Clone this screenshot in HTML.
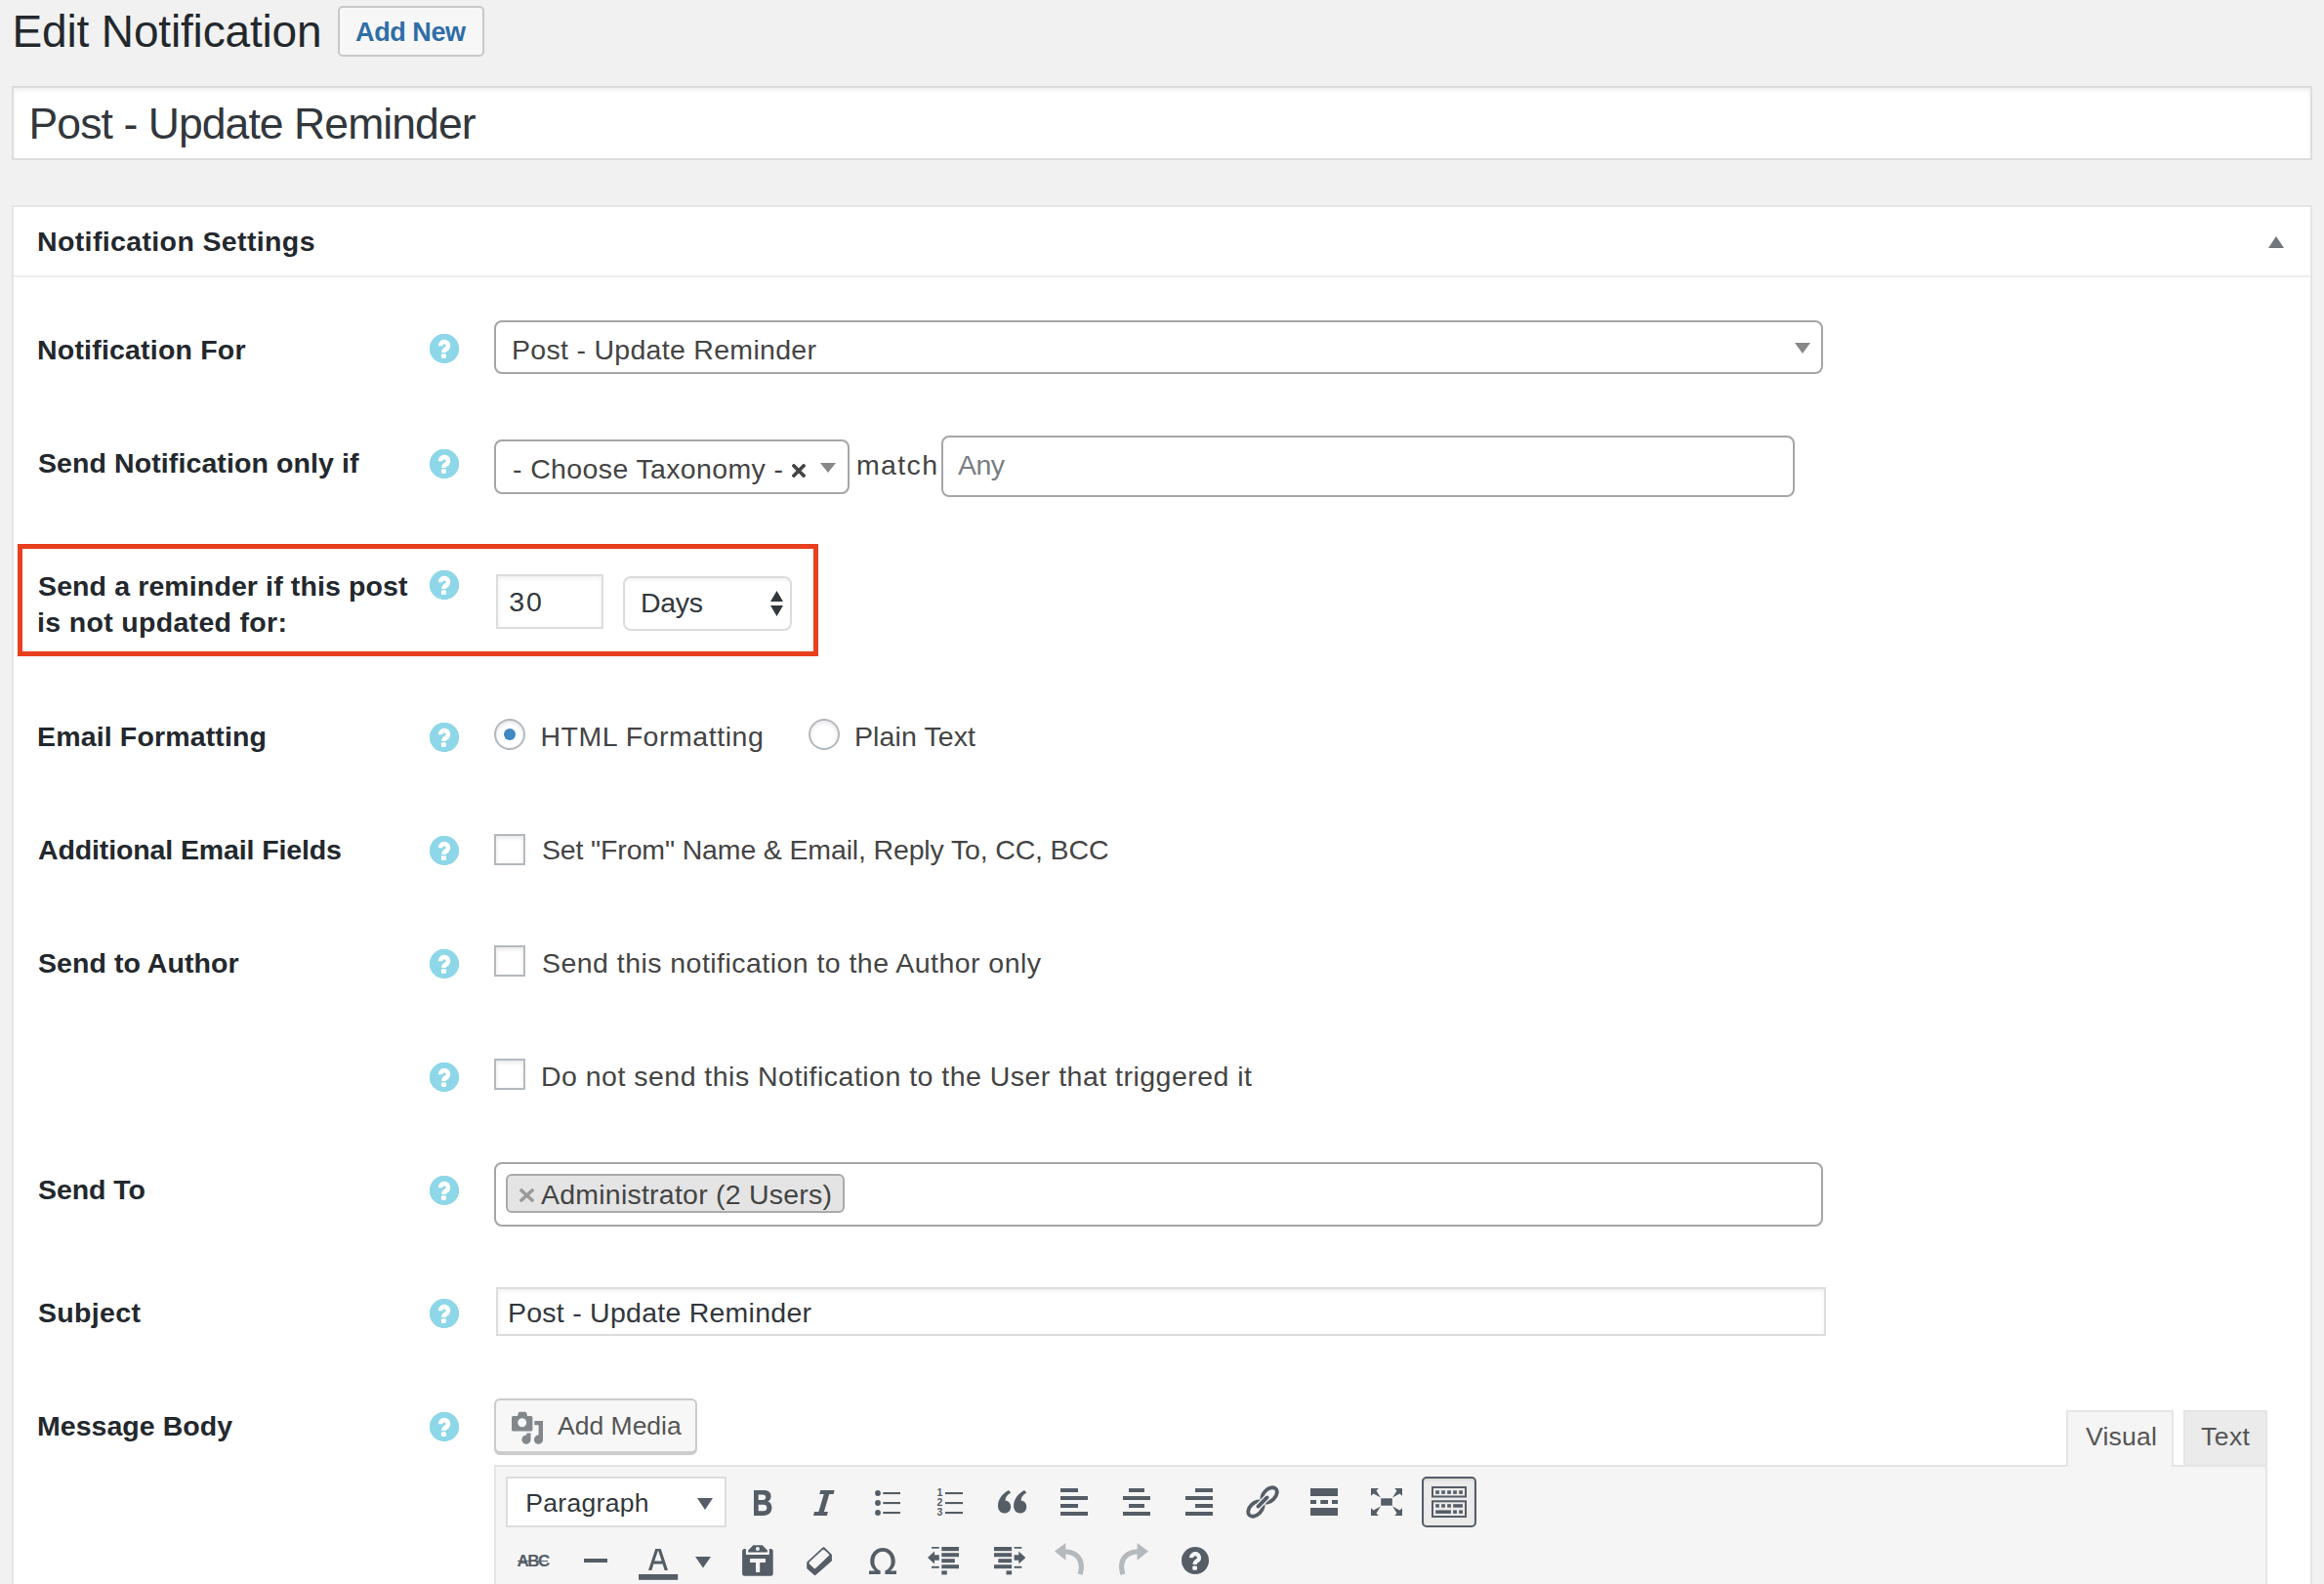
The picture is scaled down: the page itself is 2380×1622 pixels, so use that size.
<!DOCTYPE html>
<html><head><meta charset="utf-8"><title>Edit Notification</title>
<style>
html,body{margin:0;padding:0}
body{width:2380px;height:1622px;overflow:hidden;background:#f1f1f1;position:relative;font-family:"Liberation Sans",sans-serif}
.a{position:absolute;box-sizing:border-box}
.t{position:absolute;white-space:nowrap;font-family:"Liberation Sans",sans-serif}
.help{position:absolute;left:440px;width:30px;height:30px;border-radius:50%;background:#8bd7e8}
.help svg{position:absolute;left:0;top:0}
.cb{position:absolute;left:506px;width:32px;height:32px;box-sizing:border-box;border:2px solid #b4b9be;background:#fff;box-shadow:inset 0 2px 4px rgba(0,0,0,.1)}
.tb{position:absolute;fill:#555d66}

</style></head>
<body>
<!-- Add New button -->
<div class="a" style="left:346px;top:6px;width:150px;height:52px;border:2px solid #c8c8c8;border-radius:5px;background:#f7f7f7"></div>
<!-- title input -->
<div class="a" style="left:12px;top:88px;width:2356px;height:76px;border:2px solid #dddddd;background:#fff;box-shadow:inset 0 2px 4px rgba(0,0,0,.07)"></div>
<!-- postbox -->
<div class="a" style="left:12px;top:210px;width:2356px;height:1412px;border:2px solid #e5e5e5;border-bottom:none;background:#fff"></div>
<div class="a" style="left:14px;top:282px;width:2352px;height:2px;background:#eeeeee"></div>
<svg class="a" style="left:2323px;top:242px" width="16" height="12" viewBox="0 0 16 12"><path d="M8 0L16 12H0Z" fill="#72777c"/></svg>

<!-- help icons -->
<div class="help" style="top:342px"><svg width="30" height="30" viewBox="0 0 30 30"><circle cx="15" cy="15" r="15" fill="#8dd7e8"/><path d="M11 12.2A4 4 0 1 1 18.1 14.6Q14.4 16.4 14.4 19" stroke="#fff" stroke-width="4.6" fill="none"/><rect x="11.9" y="20.2" width="5.1" height="4.7" rx="1.4" fill="#fff"/></svg></div>
<div class="help" style="top:460px"><svg width="30" height="30" viewBox="0 0 30 30"><circle cx="15" cy="15" r="15" fill="#8dd7e8"/><path d="M11 12.2A4 4 0 1 1 18.1 14.6Q14.4 16.4 14.4 19" stroke="#fff" stroke-width="4.6" fill="none"/><rect x="11.9" y="20.2" width="5.1" height="4.7" rx="1.4" fill="#fff"/></svg></div>
<div class="help" style="top:584px"><svg width="30" height="30" viewBox="0 0 30 30"><circle cx="15" cy="15" r="15" fill="#8dd7e8"/><path d="M11 12.2A4 4 0 1 1 18.1 14.6Q14.4 16.4 14.4 19" stroke="#fff" stroke-width="4.6" fill="none"/><rect x="11.9" y="20.2" width="5.1" height="4.7" rx="1.4" fill="#fff"/></svg></div>
<div class="help" style="top:740px"><svg width="30" height="30" viewBox="0 0 30 30"><circle cx="15" cy="15" r="15" fill="#8dd7e8"/><path d="M11 12.2A4 4 0 1 1 18.1 14.6Q14.4 16.4 14.4 19" stroke="#fff" stroke-width="4.6" fill="none"/><rect x="11.9" y="20.2" width="5.1" height="4.7" rx="1.4" fill="#fff"/></svg></div>
<div class="help" style="top:856px"><svg width="30" height="30" viewBox="0 0 30 30"><circle cx="15" cy="15" r="15" fill="#8dd7e8"/><path d="M11 12.2A4 4 0 1 1 18.1 14.6Q14.4 16.4 14.4 19" stroke="#fff" stroke-width="4.6" fill="none"/><rect x="11.9" y="20.2" width="5.1" height="4.7" rx="1.4" fill="#fff"/></svg></div>
<div class="help" style="top:972px"><svg width="30" height="30" viewBox="0 0 30 30"><circle cx="15" cy="15" r="15" fill="#8dd7e8"/><path d="M11 12.2A4 4 0 1 1 18.1 14.6Q14.4 16.4 14.4 19" stroke="#fff" stroke-width="4.6" fill="none"/><rect x="11.9" y="20.2" width="5.1" height="4.7" rx="1.4" fill="#fff"/></svg></div>
<div class="help" style="top:1088px"><svg width="30" height="30" viewBox="0 0 30 30"><circle cx="15" cy="15" r="15" fill="#8dd7e8"/><path d="M11 12.2A4 4 0 1 1 18.1 14.6Q14.4 16.4 14.4 19" stroke="#fff" stroke-width="4.6" fill="none"/><rect x="11.9" y="20.2" width="5.1" height="4.7" rx="1.4" fill="#fff"/></svg></div>
<div class="help" style="top:1204px"><svg width="30" height="30" viewBox="0 0 30 30"><circle cx="15" cy="15" r="15" fill="#8dd7e8"/><path d="M11 12.2A4 4 0 1 1 18.1 14.6Q14.4 16.4 14.4 19" stroke="#fff" stroke-width="4.6" fill="none"/><rect x="11.9" y="20.2" width="5.1" height="4.7" rx="1.4" fill="#fff"/></svg></div>
<div class="help" style="top:1330px"><svg width="30" height="30" viewBox="0 0 30 30"><circle cx="15" cy="15" r="15" fill="#8dd7e8"/><path d="M11 12.2A4 4 0 1 1 18.1 14.6Q14.4 16.4 14.4 19" stroke="#fff" stroke-width="4.6" fill="none"/><rect x="11.9" y="20.2" width="5.1" height="4.7" rx="1.4" fill="#fff"/></svg></div>
<div class="help" style="top:1446px"><svg width="30" height="30" viewBox="0 0 30 30"><circle cx="15" cy="15" r="15" fill="#8dd7e8"/><path d="M11 12.2A4 4 0 1 1 18.1 14.6Q14.4 16.4 14.4 19" stroke="#fff" stroke-width="4.6" fill="none"/><rect x="11.9" y="20.2" width="5.1" height="4.7" rx="1.4" fill="#fff"/></svg></div>

<!-- Notification For select -->
<div class="a" style="left:506px;top:328px;width:1361px;height:55px;border:2px solid #a6a6a6;border-radius:8px;background:#fff"></div>
<svg class="a" style="left:1838px;top:351px" width="16" height="11" viewBox="0 0 16 11"><path d="M0 0H16L8 11Z" fill="#888"/></svg>

<!-- taxonomy select -->
<div class="a" style="left:506px;top:450px;width:364px;height:56px;border:2px solid #a6a6a6;border-radius:8px;background:#fff"></div>
<svg class="a" style="left:840px;top:474px" width="16" height="10" viewBox="0 0 16 10"><path d="M0 0H16L8 10Z" fill="#888"/></svg>
<svg class="a" style="left:811px;top:475px" width="14" height="14" viewBox="0 0 14 14"><path d="M2 2L12 12M12 2L2 12" stroke="#444" stroke-width="3.6" stroke-linecap="square"/></svg>
<!-- Any input -->
<div class="a" style="left:964px;top:446px;width:874px;height:63px;border:2px solid #a6a6a6;border-radius:8px;background:#fff"></div>

<!-- red highlight box -->
<div class="a" style="left:18px;top:557px;width:820px;height:115px;border:5px solid #e8401f"></div>
<!-- 30 input -->
<div class="a" style="left:508px;top:588px;width:110px;height:56px;border:2px solid #dddddd;background:#fff;box-shadow:inset 0 2px 4px rgba(0,0,0,.07)"></div>
<!-- days select -->
<div class="a" style="left:638px;top:590px;width:173px;height:56px;border:2px solid #dcdcdc;border-radius:8px;background:#fff;box-shadow:inset 0 2px 3px rgba(0,0,0,.05)"></div>
<svg class="a" style="left:789px;top:605px" width="13" height="26" viewBox="0 0 13 26"><path d="M6.5 0L13 11H0Z M0 15H13L6.5 26Z" fill="#32373c"/></svg>

<!-- radios -->
<div class="a" style="left:506px;top:736px;width:32px;height:32px;border:2px solid #b4b9be;border-radius:50%;background:#fff;box-shadow:inset 0 2px 4px rgba(0,0,0,.1)"></div>
<div class="a" style="left:516px;top:746px;width:12px;height:12px;border-radius:50%;background:#4088c0"></div>
<div class="a" style="left:828px;top:736px;width:32px;height:32px;border:2px solid #b4b9be;border-radius:50%;background:#fff;box-shadow:inset 0 2px 4px rgba(0,0,0,.1)"></div>

<!-- checkboxes -->
<div class="cb" style="top:854px"></div>
<div class="cb" style="top:968px"></div>
<div class="cb" style="top:1084px"></div>

<!-- Send To box -->
<div class="a" style="left:506px;top:1190px;width:1361px;height:66px;border:2px solid #a6a6a6;border-radius:8px;background:#fff"></div>
<div class="a" style="left:518px;top:1202px;width:347px;height:40px;border:2px solid #aaaaaa;border-radius:6px;background:#e4e4e4"></div>
<svg class="a" style="left:532px;top:1217px" width="15" height="14" viewBox="0 0 15 14"><path d="M2 2L13 12M13 2L2 12" stroke="#999" stroke-width="3.4" stroke-linecap="square"/></svg>

<!-- Subject input -->
<div class="a" style="left:508px;top:1318px;width:1362px;height:50px;border:2px solid #dddddd;background:#fff;box-shadow:inset 0 2px 4px rgba(0,0,0,.07)"></div>

<!-- Add Media button -->
<div class="a" style="left:506px;top:1432px;width:208px;height:56px;border:2px solid #cccccc;border-radius:6px;background:#f7f7f7;box-shadow:0 2px 0 #cccccc"></div>

<!-- Visual / Text tabs -->
<div class="a" style="left:2116px;top:1444px;width:110px;height:60px;border:2px solid #e5e5e5;border-bottom:none;background:#f5f5f5"></div>
<div class="a" style="left:2236px;top:1444px;width:86px;height:57px;border:2px solid #e5e5e5;border-bottom:none;background:#ebebeb"></div>

<!-- editor toolbar -->
<div class="a" style="left:506px;top:1500px;width:1816px;height:122px;border:2px solid #e5e5e5;border-bottom:none;background:#f5f5f5"></div>
<div class="a" style="left:2118px;top:1498px;width:106px;height:6px;background:#f5f5f5"></div>
<div class="a" style="left:518px;top:1512px;width:226px;height:52px;border:2px solid #dddddd;background:#fff"></div>
<svg class="a" style="left:714px;top:1534px" width="16" height="12" viewBox="0 0 16 12"><path d="M0 0H16L8 12Z" fill="#555d66"/></svg>

<!-- Add Media icon -->
<svg class="a" style="left:523px;top:1445px" width="34" height="34" viewBox="0 0 34 34" fill="#82878c">
<path fill-rule="evenodd" d="M1 6.5Q1 5 2.5 5H7L8 1.3Q8.3 0.8 9 0.8H15Q15.7 0.8 16 1.3L17 5H21Q22.4 5 22.4 6.5V19Q22.4 20.5 21 20.5H2.5Q1 20.5 1 19Z M11.7 7.2A4.5 4.5 0 1 0 11.7 16.2A4.5 4.5 0 1 0 11.7 7.2Z"/>
<path d="M24.3 10H33V28.5A4.6 4.6 0 1 1 28.6 24.6V14.3H24.3Z"/>
<path d="M16.3 22.6H20.5V28.5A4.6 4.6 0 1 1 16.3 24.6Z"/>
</svg>

<!-- toolbar row 1 -->
<svg class="tb" style="left:771.9px;top:1526px" width="19" height="26" viewBox="0 0 19 26"><path fill-rule="evenodd" d="M0 0H10.2C15.2 0 17.6 2.6 17.6 6.3C17.6 8.9 16.2 10.7 14.2 11.5C17 12.2 18.4 14.6 18.4 17.8C18.4 22.6 15.4 26 9.8 26H0Z M4.7 4.6V9.9H9C11.1 9.9 12.2 8.9 12.2 7.2C12.2 5.6 11.1 4.6 9 4.6Z M4.7 14.8V21.3H9.8C12.1 21.3 13.3 20.1 13.3 18C13.3 16 12.1 14.8 9.8 14.8Z"/></svg>
<svg class="tb" style="left:833.3px;top:1526px" width="22" height="26" viewBox="0 0 22 26"><path d="M7.2 0H21.6L20.6 3.9H16.2L10.9 22.1H14.9L13.9 26H0L1 22.1H5.4L10.7 3.9H6.2Z"/></svg>
<svg class="tb" style="left:895px;top:1525px" width="28" height="28" viewBox="0 0 28 28"><circle cx="4" cy="4" r="2.9"/><circle cx="4" cy="14" r="2.9"/><circle cx="4" cy="24" r="2.9"/><rect x="9.3" y="3" width="17.7" height="2.1"/><rect x="9.3" y="13" width="17.7" height="2.1"/><rect x="9.3" y="23" width="17.7" height="2.1"/></svg>
<svg class="tb" style="left:958px;top:1523px" width="30" height="30" viewBox="0 0 30 30"><text x="1.5" y="9.4" font-family="Liberation Sans" font-weight="bold" font-size="10.5" fill="#555d66">1</text><text x="1.5" y="19.4" font-family="Liberation Sans" font-weight="bold" font-size="10.5" fill="#555d66">2</text><text x="1.5" y="29.2" font-family="Liberation Sans" font-weight="bold" font-size="10.5" fill="#555d66">3</text><rect x="10" y="5" width="18" height="2.1"/><rect x="10" y="15" width="18" height="2.1"/><rect x="10" y="25" width="18" height="2.1"/></svg>
<svg class="tb" style="left:1021.8px;top:1526.4px" width="30" height="24" viewBox="0 0 30 24"><path id="qm" d="M10.9 0L13.2 2.6C9.2 5 7.5 7.6 7.5 10.5C10.9 11 13.2 13.5 13.2 16.9C13.2 20.6 10.3 23.5 6.7 23.5C2.7 23.5 0 20.4 0 16C0 9.6 4 3.9 10.9 0Z"/><path transform="translate(16.1 0)" d="M10.9 0L13.2 2.6C9.2 5 7.5 7.6 7.5 10.5C10.9 11 13.2 13.5 13.2 16.9C13.2 20.6 10.3 23.5 6.7 23.5C2.7 23.5 0 20.4 0 16C0 9.6 4 3.9 10.9 0Z"/></svg>
<svg class="tb" style="left:1086px;top:1524px" width="28" height="28" viewBox="0 0 28 28"><rect x="0" y="0" width="18" height="4"/><rect x="0" y="8" width="28" height="4"/><rect x="0" y="16" width="18" height="4"/><rect x="0" y="24" width="28" height="4"/></svg>
<svg class="tb" style="left:1150px;top:1524px" width="28" height="28" viewBox="0 0 28 28"><rect x="6" y="0" width="16" height="4"/><rect x="0" y="8" width="28" height="4"/><rect x="6" y="16" width="16" height="4"/><rect x="0" y="24" width="28" height="4"/></svg>
<svg class="tb" style="left:1214px;top:1524px" width="28" height="28" viewBox="0 0 28 28"><rect x="10" y="0" width="18" height="4"/><rect x="0" y="8" width="28" height="4"/><rect x="10" y="16" width="18" height="4"/><rect x="0" y="24" width="28" height="4"/></svg>
<svg class="tb" style="left:1276px;top:1521px" width="34" height="34" viewBox="0 0 34 34"><g transform="rotate(-45 17 17)" fill="none" stroke="#555d66" stroke-width="3.8"><ellipse cx="27" cy="17" rx="9.1" ry="5.9"/><ellipse cx="7" cy="17" rx="9.1" ry="5.9"/><path d="M8 17H26" stroke="#f5f5f5" stroke-width="6.4"/><path d="M10.5 17H23.5" stroke-linecap="round"/></g></svg>
<svg class="tb" style="left:1342px;top:1524px" width="28" height="28" viewBox="0 0 28 28"><rect x="0" y="0" width="28" height="8"/><rect x="0" y="12" width="6" height="4"/><rect x="10.3" y="12" width="7.7" height="4"/><rect x="22" y="12" width="6" height="4"/><rect x="0" y="20" width="28" height="8"/></svg>
<svg class="tb" style="left:1404px;top:1524px" width="32" height="28" viewBox="0 0 32 28"><rect x="10.2" y="10.3" width="11.6" height="7.4"/><path d="M0 0H7.8L5.5 2.6L9.9 9.6L2.6 5.5L0 7.8Z M32 0H24.2L26.5 2.6L22.1 9.6L29.4 5.5L32 7.8Z M0 28H7.8L5.5 25.4L9.9 18.4L2.6 22.5L0 20.2Z M32 28H24.2L26.5 25.4L22.1 18.4L29.4 22.5L32 20.2Z"/></svg>
<div class="a" style="left:1456px;top:1512px;width:56px;height:52px;border:2px solid #555d66;border-radius:5px;background:#ebebeb;box-shadow:inset 0 2px 3px rgba(0,0,0,.08)"></div>
<svg class="tb" style="left:1466px;top:1522px" width="36" height="32" viewBox="0 0 36 32"><rect x="1" y="1" width="34" height="9.5" fill="none" stroke="#555d66" stroke-width="2"/><rect x="1" y="15.3" width="34" height="15.7" fill="none" stroke="#555d66" stroke-width="2"/><rect x="4.2" y="4.3" width="3.7" height="3.5"/><rect x="10.2" y="4.3" width="3.7" height="3.5"/><rect x="16.2" y="4.3" width="3.7" height="3.5"/><rect x="22.2" y="4.3" width="3.7" height="3.5"/><rect x="28.2" y="4.3" width="3.7" height="3.5"/><rect x="4.2" y="18.2" width="3.7" height="3.5"/><rect x="10.2" y="18.2" width="3.7" height="3.5"/><rect x="16.2" y="18.2" width="3.7" height="3.5"/><rect x="22.2" y="18.2" width="9.7" height="3.5"/><rect x="4.2" y="24.4" width="15.7" height="3.5"/><rect x="22.2" y="24.4" width="3.7" height="3.5"/><rect x="28.2" y="24.4" width="3.7" height="3.5"/></svg>

<!-- toolbar row 2 -->
<div class="t" style="left:529.5px;top:1590.2px;font-size:17px;line-height:17px;color:#555d66;letter-spacing:-1.5px;font-weight:bold">ABC</div>
<div class="a" style="left:530px;top:1597.5px;width:31px;height:1.6px;background:#555d66"></div>
<div class="a" style="left:598px;top:1596px;width:24px;height:4px;background:#555d66"></div>
<svg class="tb" style="left:654px;top:1585px" width="41" height="34" viewBox="0 0 41 34"><path d="M10 23L17.2 1H22.8L30 23H26.6L24.6 16.6H15.4L13.4 23Z M16.3 13.6H23.7L20 2.6Z" fill-rule="evenodd"/><rect x="0" y="27" width="40.2" height="5.8"/></svg>
<svg class="tb" style="left:712px;top:1594px" width="16" height="12" viewBox="0 0 16 12"><path d="M0 0H16L8 11.6Z"/></svg>
<svg class="tb" style="left:760px;top:1582px" width="32" height="32" viewBox="0 0 32 32"><path fill-rule="evenodd" d="M2.6 4.1H3.9V9.9H27.8V4.1H29.2Q31.7 4.1 31.7 6.6V29.3Q31.7 31.8 29.2 31.8H2.6Q0.1 31.8 0.1 29.3V6.6Q0.1 4.1 2.6 4.1Z M8 14H24V18H18.2V28H14V18H8Z"/><path fill-rule="evenodd" d="M11.4 0.2H20.7L25.9 5.6V7.6H6.2V5.6Z M15.9 2.1A2 2 0 1 0 15.9 6.1A2 2 0 1 0 15.9 2.1Z"/></svg>
<svg class="tb" style="left:820px;top:1578px" width="40" height="40" viewBox="0 0 40 40"><path d="M23.5 7.5L30.6 14.4V19.7L14.6 33.9L7.5 27.6V22.3Z" stroke="#555d66" stroke-width="2.6" stroke-linejoin="round"/><path d="M23.2 9.9L28 14.2L14.6 27L9.7 22.5Z" fill="#f5f5f5" stroke="#f5f5f5" stroke-width="2.4" stroke-linejoin="round"/></svg>
<svg class="tb" style="left:890px;top:1585px" width="28" height="27" viewBox="0 0 28 27"><path d="M0 27V23.4H6.2C3 21.3 1.2 18 1.2 13.8C1.2 5.8 6.8 0 14 0S26.8 5.8 26.8 13.8C26.8 18 25 21.3 21.8 23.4H28V27H16.4V23.2C20.3 21.8 22.6 18.4 22.6 13.9C22.6 8 18.9 3.8 14 3.8S5.4 8 5.4 13.9C5.4 18.4 7.7 21.8 11.6 23.2V27Z"/></svg>
<svg class="tb" style="left:950px;top:1583.8px" width="33" height="29" viewBox="0 0 33 29"><rect x="14.3" y="0" width="17.7" height="4.2"/><rect x="14.3" y="6.2" width="17.7" height="4"/><rect x="14.3" y="12.2" width="13.5" height="4"/><rect x="14.3" y="18.2" width="17.7" height="4"/><rect x="14.3" y="24.4" width="5.5" height="4"/><rect x="4" y="0" width="7.8" height="1.7"/><rect x="4" y="19.8" width="7.8" height="2"/><path d="M0 11L7 4.6V8.2H11.8V13.8H7V17.5Z"/></svg>
<svg class="tb" style="left:1017.7px;top:1583.8px" width="33" height="29" viewBox="0 0 33 29"><rect x="0" y="0" width="18.1" height="4.2"/><rect x="0" y="6.2" width="18.1" height="4"/><rect x="4.3" y="12.2" width="13.8" height="4"/><rect x="0" y="18.2" width="18.1" height="4"/><rect x="12.5" y="24.4" width="5.6" height="4"/><rect x="20.6" y="0" width="7.8" height="1.7"/><rect x="20.6" y="19.8" width="7.8" height="2"/><path d="M32.3 11L25.3 4.6V8.2H20.6V13.8H25.3V17.5Z"/></svg>
<svg class="a" style="left:1080px;top:1580px" width="33" height="34" viewBox="0 0 33 34"><path d="M0 8.6L11.4 0V6.5C22 6.5 30 13.5 30 24C30 27 29.5 30 28.5 33L23.6 31.2C24.4 29 24.8 26.8 24.8 24.6C24.8 16.6 19 11.6 11.4 11.6V17.7Z" fill="#b4b9be"/></svg>
<svg class="a" style="left:1144px;top:1580px" width="33" height="34" viewBox="0 0 33 34"><path transform="translate(32 0) scale(-1 1)" d="M0 8.6L11.4 0V6.5C22 6.5 30 13.5 30 24C30 27 29.5 30 28.5 33L23.6 31.2C24.4 29 24.8 26.8 24.8 24.6C24.8 16.6 19 11.6 11.4 11.6V17.7Z" fill="#b4b9be"/></svg>
<svg class="tb" style="left:1210px;top:1584px" width="28" height="28" viewBox="0 0 28 28"><circle cx="14" cy="14" r="14"/><path d="M10.2 11.2A3.9 3.9 0 1 1 16.9 13.7Q13.6 15.3 13.6 18" stroke="#f5f5f5" stroke-width="4.2" fill="none"/><rect x="11.3" y="19.4" width="4.7" height="4.4" rx="1.2" fill="#f5f5f5"/></svg>

<div id="h1" class="t" style="left:12.60px;top:9.45px;font-size:46px;line-height:46px;font-weight:normal;color:#23282d;letter-spacing:-0.162px">Edit Notification</div>
<div id="addnew" class="t" style="left:364.10px;top:20.24px;font-size:27px;line-height:27px;font-weight:bold;color:#2e6ea6;letter-spacing:-0.427px">Add New</div>
<div id="title" class="t" style="left:29.60px;top:104.52px;font-size:44.5px;line-height:44.5px;font-weight:normal;color:#32373c;letter-spacing:-0.923px">Post - Update Reminder</div>
<div id="ns" class="t" style="left:38.00px;top:233.37px;font-size:28.5px;line-height:28.5px;font-weight:bold;color:#23282d;letter-spacing:0.370px">Notification Settings</div>
<div id="l1" class="t" style="left:38.00px;top:344.17px;font-size:28.5px;line-height:28.5px;font-weight:bold;color:#23282d;letter-spacing:0.197px">Notification For</div>
<div id="l2" class="t" style="left:39.00px;top:460.17px;font-size:28.5px;line-height:28.5px;font-weight:bold;color:#23282d;letter-spacing:0.094px">Send Notification only if</div>
<div id="l3a" class="t" style="left:39.00px;top:586.17px;font-size:28.5px;line-height:28.5px;font-weight:bold;color:#23282d;letter-spacing:0.117px">Send a reminder if this post</div>
<div id="l3b" class="t" style="left:38.00px;top:623.17px;font-size:28.5px;line-height:28.5px;font-weight:bold;color:#23282d;letter-spacing:0.325px">is not updated for:</div>
<div id="l4" class="t" style="left:38.00px;top:740.17px;font-size:28.5px;line-height:28.5px;font-weight:bold;color:#23282d;letter-spacing:0.148px">Email Formatting</div>
<div id="l5" class="t" style="left:39.00px;top:856.17px;font-size:28.5px;line-height:28.5px;font-weight:bold;color:#23282d;letter-spacing:-0.117px">Additional Email Fields</div>
<div id="l6" class="t" style="left:39.00px;top:972.17px;font-size:28.5px;line-height:28.5px;font-weight:bold;color:#23282d;letter-spacing:0.056px">Send to Author</div>
<div id="l8" class="t" style="left:39.00px;top:1204.37px;font-size:28.5px;line-height:28.5px;font-weight:bold;color:#23282d;letter-spacing:-0.049px">Send To</div>
<div id="l9" class="t" style="left:39.00px;top:1330.17px;font-size:28.5px;line-height:28.5px;font-weight:bold;color:#23282d;letter-spacing:0.341px">Subject</div>
<div id="l10" class="t" style="left:38.00px;top:1446.37px;font-size:28.5px;line-height:28.5px;font-weight:bold;color:#23282d;letter-spacing:0.039px">Message Body</div>
<div id="v1" class="t" style="left:524.00px;top:344.17px;font-size:28.5px;line-height:28.5px;font-weight:normal;color:#444444;letter-spacing:0.298px">Post - Update Reminder</div>
<div id="v2" class="t" style="left:525.00px;top:465.87px;font-size:28.5px;line-height:28.5px;font-weight:normal;color:#444444;letter-spacing:0.371px">- Choose Taxonomy -</div>
<div id="match" class="t" style="left:877.00px;top:461.87px;font-size:28.5px;line-height:28.5px;font-weight:normal;color:#444444;letter-spacing:1.352px">match</div>
<div id="any" class="t" style="left:981.00px;top:461.87px;font-size:28.5px;line-height:28.5px;font-weight:normal;color:#7a7e83;letter-spacing:-0.546px">Any</div>
<div id="n30" class="t" style="left:521.30px;top:601.87px;font-size:28.5px;line-height:28.5px;font-weight:normal;color:#32373c;letter-spacing:1.794px">30</div>
<div id="days" class="t" style="left:656.00px;top:603.37px;font-size:28.5px;line-height:28.5px;font-weight:normal;color:#32373c;letter-spacing:-0.303px">Days</div>
<div id="html" class="t" style="left:553.40px;top:740.17px;font-size:28.5px;line-height:28.5px;font-weight:normal;color:#444444;letter-spacing:0.560px">HTML Formatting</div>
<div id="plain" class="t" style="left:875.00px;top:740.17px;font-size:28.5px;line-height:28.5px;font-weight:normal;color:#444444;letter-spacing:0.106px">Plain Text</div>
<div id="from" class="t" style="left:555.00px;top:856.17px;font-size:28.5px;line-height:28.5px;font-weight:normal;color:#444444;letter-spacing:-0.151px">Set "From" Name &amp; Email, Reply To, CC, BCC</div>
<div id="author" class="t" style="left:555.00px;top:972.17px;font-size:28.5px;line-height:28.5px;font-weight:normal;color:#444444;letter-spacing:0.456px">Send this notification to the Author only</div>
<div id="donot" class="t" style="left:554.00px;top:1087.67px;font-size:28.5px;line-height:28.5px;font-weight:normal;color:#444444;letter-spacing:0.479px">Do not send this Notification to the User that triggered it</div>
<div id="admin" class="t" style="left:554.00px;top:1208.87px;font-size:28.5px;line-height:28.5px;font-weight:normal;color:#444444;letter-spacing:0.228px">Administrator (2 Users)</div>
<div id="subj" class="t" style="left:520.00px;top:1330.17px;font-size:28.5px;line-height:28.5px;font-weight:normal;color:#32373c;letter-spacing:0.251px">Post - Update Reminder</div>
<div id="addmedia" class="t" style="left:571.00px;top:1447.36px;font-size:26.5px;line-height:26.5px;font-weight:normal;color:#555555;letter-spacing:0.008px">Add Media</div>
<div id="para" class="t" style="left:538.20px;top:1525.56px;font-size:26.5px;line-height:26.5px;font-weight:normal;color:#32373c;letter-spacing:0.331px">Paragraph</div>
<div id="visual" class="t" style="left:2136.00px;top:1457.56px;font-size:26.5px;line-height:26.5px;font-weight:normal;color:#555555;letter-spacing:0.263px">Visual</div>
<div id="texttab" class="t" style="left:2254.00px;top:1457.56px;font-size:26.5px;line-height:26.5px;font-weight:normal;color:#555555;letter-spacing:0.457px">Text</div>
</body></html>
